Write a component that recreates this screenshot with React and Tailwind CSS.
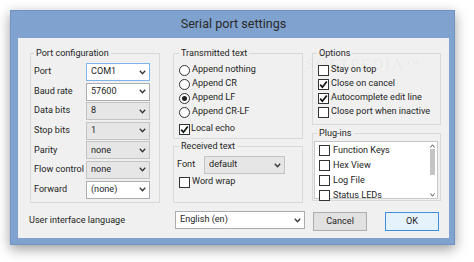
import React from "react";

const FONT = { fontFamily: '"Segoe UI", Roboto, "Liberation Sans", sans-serif' };

function Chevron() {
  return (
    <svg width="7" height="5" viewBox="0 0 7 5" className="shrink-0">
      <polyline points="0.8,0.8 3.5,3.8 6.2,0.8" fill="none" stroke="#333" strokeWidth="1.3" />
    </svg>
  );
}

function Select({ value, width = "w-[64px]", disabled = false, focused = false }) {
  const tone = disabled
    ? "bg-[#e6e6e6] border-[#c3c3c3]"
    : focused
    ? "bg-white border-[#7eb4ea]"
    : "bg-white border-[#abadb3]";
  return (
    <div className={`${width} h-[18px] shrink-0 border ${tone} flex items-center justify-between pl-[4px] pr-[3px]`}>
      <span className="truncate">{value}</span>
      <Chevron />
    </div>
  );
}

function Check({ checked }) {
  return (
    <span className="w-[11px] h-[11px] border border-[#333] bg-white flex items-center justify-center shrink-0">
      {checked && (
        <svg width="9" height="9" viewBox="0 0 9 9">
          <polyline points="1.2,4.6 3.4,7.2 7.8,1.4" fill="none" stroke="#111" strokeWidth="1.7" />
        </svg>
      )}
    </span>
  );
}

function Radio({ checked }) {
  return (
    <span className="w-[11px] h-[11px] rounded-full border border-[#333] bg-white flex items-center justify-center shrink-0">
      {checked && <span className="w-[5px] h-[5px] rounded-full bg-[#222]" />}
    </span>
  );
}

function Group({ title, className = "", legendClass = "", children }) {
  return (
    <fieldset className={`border border-[#d9d9d9] min-w-0 pr-0 pb-0 ${className}`}>
      <legend className={`px-[2px] leading-[12px] ${legendClass}`}>{title}</legend>
      {children}
    </fieldset>
  );
}

const portRows = [
  ["Port", "COM1", false, true],
  ["Baud rate", "57600", false, false],
  ["Data bits", "8", true, false],
  ["Stop bits", "1", true, false],
  ["Parity", "none", true, false],
  ["Flow control", "none", true, false],
  ["Forward", "(none)", false, false],
];

export default function App() {
  return (
    <div className="w-[474px] h-[262px] bg-white pt-[10px] pl-[10px] text-[9.1px] text-[#1e1e1e]" style={FONT}>
      <div className="w-[445px] h-[235px] bg-[#7fa2cf] border border-[#6f93c2] shadow-[0_4px_12px_rgba(0,0,0,0.4)] flex flex-col pl-[7px] pr-[5px] pb-[6px]">
        {/* title bar */}
        <div className="h-[27px] shrink-0 flex items-center justify-center text-[12.6px] text-[#2a2a2a] pb-[1px]">
          Serial port settings
        </div>

        {/* client area */}
        <div className="relative flex-1 bg-[#f0f0f0] pt-[9px] pl-[12px] pr-[8px]">
          <div className="flex items-start">
            {/* Port configuration */}
            <Group title="Port configuration" className="w-[130px] h-[156px] pl-[3px] pt-[4px]" legendClass="ml-[0px]">
              <div className="flex flex-col gap-[1.6px]">
                {portRows.map(([label, value, disabled, focused]) => (
                  <div key={label} className="flex items-center">
                    <span className="w-[52px] whitespace-nowrap">{label}</span>
                    <Select value={value} disabled={disabled} focused={focused} />
                  </div>
                ))}
              </div>
            </Group>

            {/* middle column */}
            <div className="ml-[13px] w-[130px] flex flex-col gap-[1px]">
              <Group title="Transmitted text" className="h-[92px] pl-[5px] pt-[4px]">
                {["Append nothing", "Append CR", "Append LF", "Append CR-LF"].map((t) => (
                  <div key={t} className="h-[14px] flex items-center gap-[2px]">
                    <Radio checked={t === "Append LF"} />
                    <span>{t}</span>
                  </div>
                ))}
                <div className="mt-[3px] h-[14px] flex items-center gap-[1px]">
                  <Check checked />
                  <span>Local echo</span>
                </div>
              </Group>

              <Group title="Received text" className="h-[63px] pl-[3px] pt-[4px]" legendClass="ml-[2px]">
                <div className="flex items-center">
                  <span className="w-[27px]">Font</span>
                  <Select value="default" width="w-[81px]" disabled />
                </div>
                <div className="mt-[1px] pl-[2px] h-[14px] flex items-center gap-[2px]">
                  <Check />
                  <span>Word wrap</span>
                </div>
              </Group>
            </div>

            {/* right column */}
            <div className="ml-[9px] w-[129px] flex flex-col gap-[2px]">
              <Group title="Options" className="h-[78px] pl-[5px] pt-[4px]" legendClass="-ml-[1px]">
                {[
                  ["Stay on top", false],
                  ["Close on cancel", true],
                  ["Autocomplete edit line", true],
                  ["Close port when inactive", false],
                ].map(([t, c]) => (
                  <div key={t} className="h-[14px] flex items-center gap-[2px] whitespace-nowrap">
                    <Check checked={c} />
                    <span>{t}</span>
                  </div>
                ))}
              </Group>

              <Group title="Plug-ins" className="h-[74px] pl-[1px] pr-[1px] pt-[2px]" legendClass="ml-[3px]">
                <div className="h-[58px] mr-[1px] bg-white border border-[#c8c8c8] flex">
                  <div className="flex-1 pl-[4px] pt-[1px]">
                    {["Function Keys", "Hex View", "Log File", "Status LEDs"].map((t) => (
                      <div key={t} className="h-[15px] flex items-center gap-[3px]">
                        <Check />
                        <span>{t}</span>
                      </div>
                    ))}
                  </div>
                  {/* scrollbar */}
                  <div className="w-[9px] flex flex-col items-center pt-[2px] pb-[1px]">
                    <svg width="5" height="4" viewBox="0 0 5 4">
                      <polyline points="0.5,3.5 2.5,0.8 4.5,3.5" fill="none" stroke="#555" strokeWidth="1" />
                    </svg>
                    <div className="mt-[1px] w-[5px] h-[26px] bg-[#c4c4c4]" />
                    <div className="flex-1" />
                    <svg width="5" height="4" viewBox="0 0 5 4">
                      <polyline points="0.5,0.5 2.5,3.2 4.5,0.5" fill="none" stroke="#555" strokeWidth="1" />
                    </svg>
                  </div>
                </div>
              </Group>
            </div>
          </div>

          {/* bottom row */}
          <div className="mt-[8px] flex items-start">
            <span className="w-[146px] -ml-[1px] leading-[18px]">User interface language</span>
            <Select value="English (en)" width="w-[130px]" />
            <button className="ml-[8px] mt-[1px] w-[54px] h-[19px] bg-[#e1e1e1] border border-[#adadad]">
              Cancel
            </button>
            <button className="ml-[18px] mt-[1px] w-[54px] h-[19px] bg-[#e5f1fb] border border-[#3c8fe0]">
              OK
            </button>
          </div>

          {/* watermark */}
          <span
            className="absolute left-[288px] top-[15px] text-[15px] tracking-[2px] text-[#000]/[0.05] select-none pointer-events-none"
            style={{ fontFamily: '"Liberation Serif", serif' }}
          >
            SOFTPEDIA™
          </span>
        </div>
      </div>
    </div>
  );
}
